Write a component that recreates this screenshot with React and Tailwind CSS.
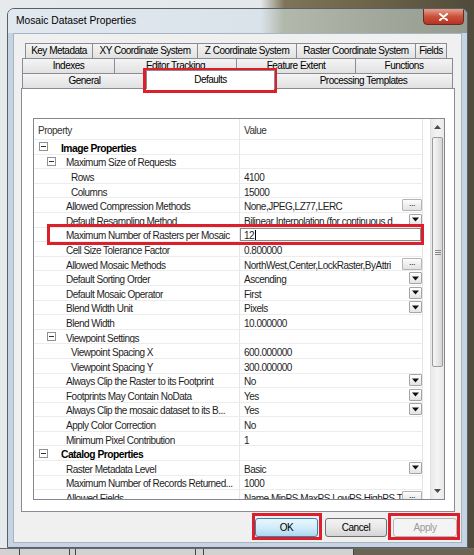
import React from 'react';

// one row of the property grid: t = 'cat' | 'sub' | 1 | 2 (indent level)
const rows = [
    { t: 'cat', label: 'Image Properties' },
    { t: 'sub', label: 'Maximum Size of Requests' },
    { t: 2, label: 'Rows', value: '4100' },
    { t: 2, label: 'Columns', value: '15000' },
    { t: 1, label: 'Allowed Compression Methods', value: 'None,JPEG,LZ77,LERC', ctl: 'ell' },
    { t: 1, label: 'Default Resampling Method', value: 'Bilinear Interpolation (for continuous d...', ctl: 'dd' },
    { t: 1, label: 'Maximum Number of Rasters per Mosaic', value: '12', ctl: 'edit' },
    { t: 1, label: 'Cell Size Tolerance Factor', value: '0.800000' },
    { t: 1, label: 'Allowed Mosaic Methods', value: 'NorthWest,Center,LockRaster,ByAttri', ctl: 'ell' },
    { t: 1, label: 'Default Sorting Order', value: 'Ascending', ctl: 'dd' },
    { t: 1, label: 'Default Mosaic Operator', value: 'First', ctl: 'dd' },
    { t: 1, label: 'Blend Width Unit', value: 'Pixels', ctl: 'dd' },
    { t: 1, label: 'Blend Width', value: '10.000000' },
    { t: 'sub', label: 'Viewpoint Settings' },
    { t: 2, label: 'Viewpoint Spacing X', value: '600.000000' },
    { t: 2, label: 'Viewpoint Spacing Y', value: '300.000000' },
    { t: 1, label: 'Always Clip the Raster to its Footprint', value: 'No', ctl: 'dd' },
    { t: 1, label: 'Footprints May Contain NoData', value: 'Yes', ctl: 'dd' },
    { t: 1, label: 'Always Clip the mosaic dataset to its B...', value: 'Yes', ctl: 'dd' },
    { t: 1, label: 'Apply Color Correction', value: 'No' },
    { t: 1, label: 'Minimum Pixel Contribution', value: '1' },
    { t: 'cat', label: 'Catalog Properties' },
    { t: 1, label: 'Raster Metadata Level', value: 'Basic', ctl: 'dd' },
    { t: 1, label: 'Maximum Number of Records Returned...', value: '1000' },
    { t: 1, label: 'Allowed Fields', value: 'Name,MinPS,MaxPS,LowPS,HighPS,Ta', ctl: 'ell' },
];

const tabRow1 = [
    { label: 'Key Metadata', w: 'w-[68px]' },
    { label: 'XY Coordinate System', w: 'w-[105px]' },
    { label: 'Z Coordinate System', w: 'w-[99px]' },
    { label: 'Raster Coordinate System', w: 'w-[119px]' },
    { label: 'Fields', w: 'w-[31px]' },
];
const tabRow2 = [
    { label: 'Indexes', w: 'w-[93px]' },
    { label: 'Editor Tracking', w: 'w-[122px]' },
    { label: 'Feature Extent', w: 'w-[119px]' },
    { label: 'Functions', w: 'w-[97px]' },
];

const tabBase = 'flex items-center justify-center h-full border-t border-r border-[#898c95] bg-gradient-to-b from-[#f4f4f4] to-[#e1e1e1] text-[10px] tracking-[-0.5px] leading-none text-black';

const TabRow = ({ tabs, className }) => (
    <div className={'flex h-[15px] ' + className}>
        {tabs.map((tab, i) => (
            <div key={tab.label} className={tabBase + ' ' + tab.w + (i === 0 ? ' border-l' : '')}>
                {tab.label}
            </div>
        ))}
    </div>
);

const Collapse = () => (
    <span className="w-[9px] h-[9px] shrink-0 border border-[#919191] bg-white flex items-center justify-center">
        <span className="w-[5px] h-px bg-[#333]" />
    </span>
);

const DropBtn = () => (
    <span className="w-[13px] h-[12px] shrink-0 border border-[#a4a4a4] rounded-[1px] bg-gradient-to-b from-white to-[#e4e4e4] flex items-center justify-center">
        <svg width="7" height="5" viewBox="0 0 7 5"><path d="M0 0.5h7L3.5 4.5z" fill="#111" /></svg>
    </span>
);

const EllBtn = () => (
    <span className="w-[20px] h-[12px] shrink-0 border border-[#b4b4b4] rounded-[1px] bg-gradient-to-b from-[#fdfdfd] to-[#e2e2e2] flex items-center justify-center text-[9px] leading-none pb-[3px] text-[#222]">
        ...
    </span>
);

const PropRow = ({ row }) => {
    let left;
    if (row.t === 'cat') {
        left = (
            <>
                <span className="ml-[5px]"><Collapse /></span>
                <span className="ml-[13px] pt-[3px] font-bold text-[10.25px] text-black">{row.label}</span>
            </>
        );
    } else if (row.t === 'sub') {
        left = (
            <>
                <span className="ml-[13px]"><Collapse /></span>
                <span className="ml-[10px] pt-[3px]">{row.label}</span>
            </>
        );
    } else {
        left = <span className={'pt-[3px] ' + (row.t === 2 ? 'pl-[37px]' : 'pl-[32px]')}>{row.label}</span>;
    }

    return (
        <div className="flex h-[14.6px] shrink-0 border-b border-[#ececec]">
            <div className="w-[206px] shrink-0 flex items-center border-r border-[#e6e6e6] whitespace-nowrap overflow-hidden">
                {left}
            </div>
            {row.ctl === 'edit' ? (
                <div className="flex-1 flex items-stretch">
                    <div className="w-[181px] border border-[#8a8a8a] bg-white flex items-center pl-[3px]">
                        <span className="pt-[3px]">{row.value}</span>
                        <span className="w-px h-[10px] bg-black ml-px mt-[2px]" />
                    </div>
                </div>
            ) : (
                <div className="flex-1 min-w-0 flex items-center pl-[4px]">
                    <span className="flex-1 min-w-0 pt-[3px] overflow-hidden whitespace-nowrap">{row.value}</span>
                    {row.ctl === 'dd' && <DropBtn />}
                    {row.ctl === 'ell' && <EllBtn />}
                </div>
            )}
        </div>
    );
};

const ScrollArrow = ({ up }) => (
    <div className="h-[16px] shrink-0 flex items-center justify-center">
        <svg width="7" height="4" viewBox="0 0 7 4">
            <path d={up ? 'M0 4h7L3.5 0z' : 'M0 0h7L3.5 4z'} fill="#4a4a4a" />
        </svg>
    </div>
);

const Scrollbar = () => (
    <div className="w-[14px] shrink-0 flex flex-col bg-gradient-to-r from-[#e9e9e9] via-[#f4f4f4] to-[#e9e9e9] border-l border-[#e0e0e0]">
        <ScrollArrow up />
        <div className="h-[2px] shrink-0" />
        <div className="h-[230px] shrink-0 mx-px rounded-[2px] border border-[#9b9b9b] bg-gradient-to-r from-[#f6f6f6] via-[#e9e9e9] to-[#d6d6d6] flex flex-col items-center justify-center gap-px">
            <span className="w-[6px] h-px bg-[#8a8a8a]" />
            <span className="w-[6px] h-px bg-[#8a8a8a]" />
            <span className="w-[6px] h-px bg-[#8a8a8a]" />
        </div>
        <div className="flex-1" />
        <ScrollArrow />
    </div>
);

const Button = ({ children, className }) => (
    <div className={'h-[19px] rounded-[3px] border flex items-center justify-center text-[10px] tracking-[-0.4px] leading-none ' + className}>
        {children}
    </div>
);

const RedBox = ({ className }) => (
    <div className={'absolute border-[3px] border-[#dc1f2a] pointer-events-none ' + className} />
);

export default function App() {
    return (
        <div className="relative w-[474px] h-[555px] overflow-hidden flex flex-col font-['Liberation_Sans',Arial,sans-serif] bg-[linear-gradient(to_right,#e7eaed_0%,#e4e8eb_55%,#7e745a_60%,#6b6248_80%,#4f4a3a_100%)]">
            <div className="h-[8px] shrink-0" />

            {/* window */}
            <div className="ml-[7px] w-[461px] h-[540px] shrink-0 rounded-t-[7px] border border-[#56616d] bg-[#c6d4e2] flex flex-col overflow-hidden">
                {/* title bar */}
                <div className="h-[24px] shrink-0 flex items-start bg-[linear-gradient(to_right,#e1e8ef_0%,#dbe3ea_55%,#b3b8ad_60%,#a2a89b_80%,#959b90_100%)]">
                    <span className="pl-[8px] pt-[7px] text-[10.25px] leading-none text-black">Mosaic Dataset Properties</span>
                    <div className="ml-auto mr-[3px] -mt-px w-[41px] h-[17px] rounded-b-[4px] border border-[#6b2a22] bg-gradient-to-b from-[#e7a08d] via-[#c9523d] to-[#b8321f] flex items-center justify-center">
                        <svg width="9" height="8" viewBox="0 0 9 8">
                            <path d="M1 1l7 6M8 1L1 7" stroke="#fff" strokeWidth="2" strokeLinecap="round" />
                        </svg>
                    </div>
                </div>

                {/* client area */}
                <div className="ml-[5px] w-[449px] h-[510px] shrink-0 border border-[#a7b4c1] bg-[#f0f0f0] flex flex-col text-[10px] tracking-[-0.5px] text-[#1e1e1e]">
                    <TabRow tabs={tabRow1} className="mt-[9px] ml-[11px]" />
                    <TabRow tabs={tabRow2} className="ml-[8px]" />
                    <div className="flex h-[15px] ml-[8px] items-end">
                        <div className={tabBase + ' w-[125px] border-l'}>General</div>
                        <div className="relative z-10 w-[129px] -ml-px h-[19px] -mb-px flex items-center justify-center border-t border-l border-r border-[#898c95] bg-white text-[10px] tracking-[-0.5px] leading-none text-black">
                            Defaults
                        </div>
                        <div className={tabBase + ' w-[178px]'}>Processing Templates</div>
                    </div>

                    {/* tab panel */}
                    <div className="ml-[7px] w-[434px] h-[424px] shrink-0 border border-[#898c95] bg-white">
                        <div className="ml-[11px] mt-[29px] w-[412px] h-[382px] border border-[#828790] flex overflow-hidden">
                            <div className="w-[389px] shrink-0 flex flex-col border-r border-[#e4e4e4] overflow-hidden">
                                <div className="flex h-[21px] shrink-0 border-b border-[#ececec] text-[#333]">
                                    <div className="w-[206px] shrink-0 pl-[4px] pt-[3px] flex items-center border-r border-[#e6e6e6]">Property</div>
                                    <div className="flex-1 pl-[4px] pt-[3px] flex items-center">Value</div>
                                </div>
                                {rows.map((row) => (
                                    <PropRow key={row.label} row={row} />
                                ))}
                            </div>
                            <div className="w-[7px] shrink-0" />
                            <Scrollbar />
                        </div>
                    </div>

                    {/* buttons */}
                    <div className="mt-[6px] flex justify-end pr-[4px]">
                        <Button className="w-[63px] border-[#3c7fb1] bg-gradient-to-b from-[#eaf6fd] via-[#d3ecfa] to-[#a9d9f2] text-black">OK</Button>
                        <Button className="ml-[7px] w-[62px] border-[#707070] bg-gradient-to-b from-[#f3f3f3] via-[#e8e8e8] to-[#d4d4d4] text-black">Cancel</Button>
                        <Button className="ml-[6px] w-[64px] border-[#b2b6b9] bg-[#f4f4f4] text-[#9a9a9a]">Apply</Button>
                    </div>
                </div>
            </div>

            {/* table peeking out under the dialog */}
            <div className="flex-1 flex bg-[#d2d2d2] border-t border-[#6a6a6a]">
                <div className="w-[20px] border-r border-[#444]" />
                <div className="w-[50px] border-r border-[#444]" />
                <div className="w-[6px] border-r border-[#444]" />
                <div className="w-[120px] border-r border-[#444]" />
                <div className="w-[8px] border-r border-[#444]" />
                <div className="w-[150px] border-r border-[#444]" />
                <div className="flex-1 bg-[#6b6452]" />
            </div>

            {/* red annotation boxes */}
            <RedBox className="left-[143px] top-[68px] w-[134px] h-[25px]" />
            <RedBox className="left-[47px] top-[224px] w-[377px] h-[21px]" />
            <RedBox className="left-[252px] top-[513px] w-[70px] h-[27px]" />
            <RedBox className="left-[388px] top-[513px] w-[72px] h-[27px]" />
        </div>
    );
}
